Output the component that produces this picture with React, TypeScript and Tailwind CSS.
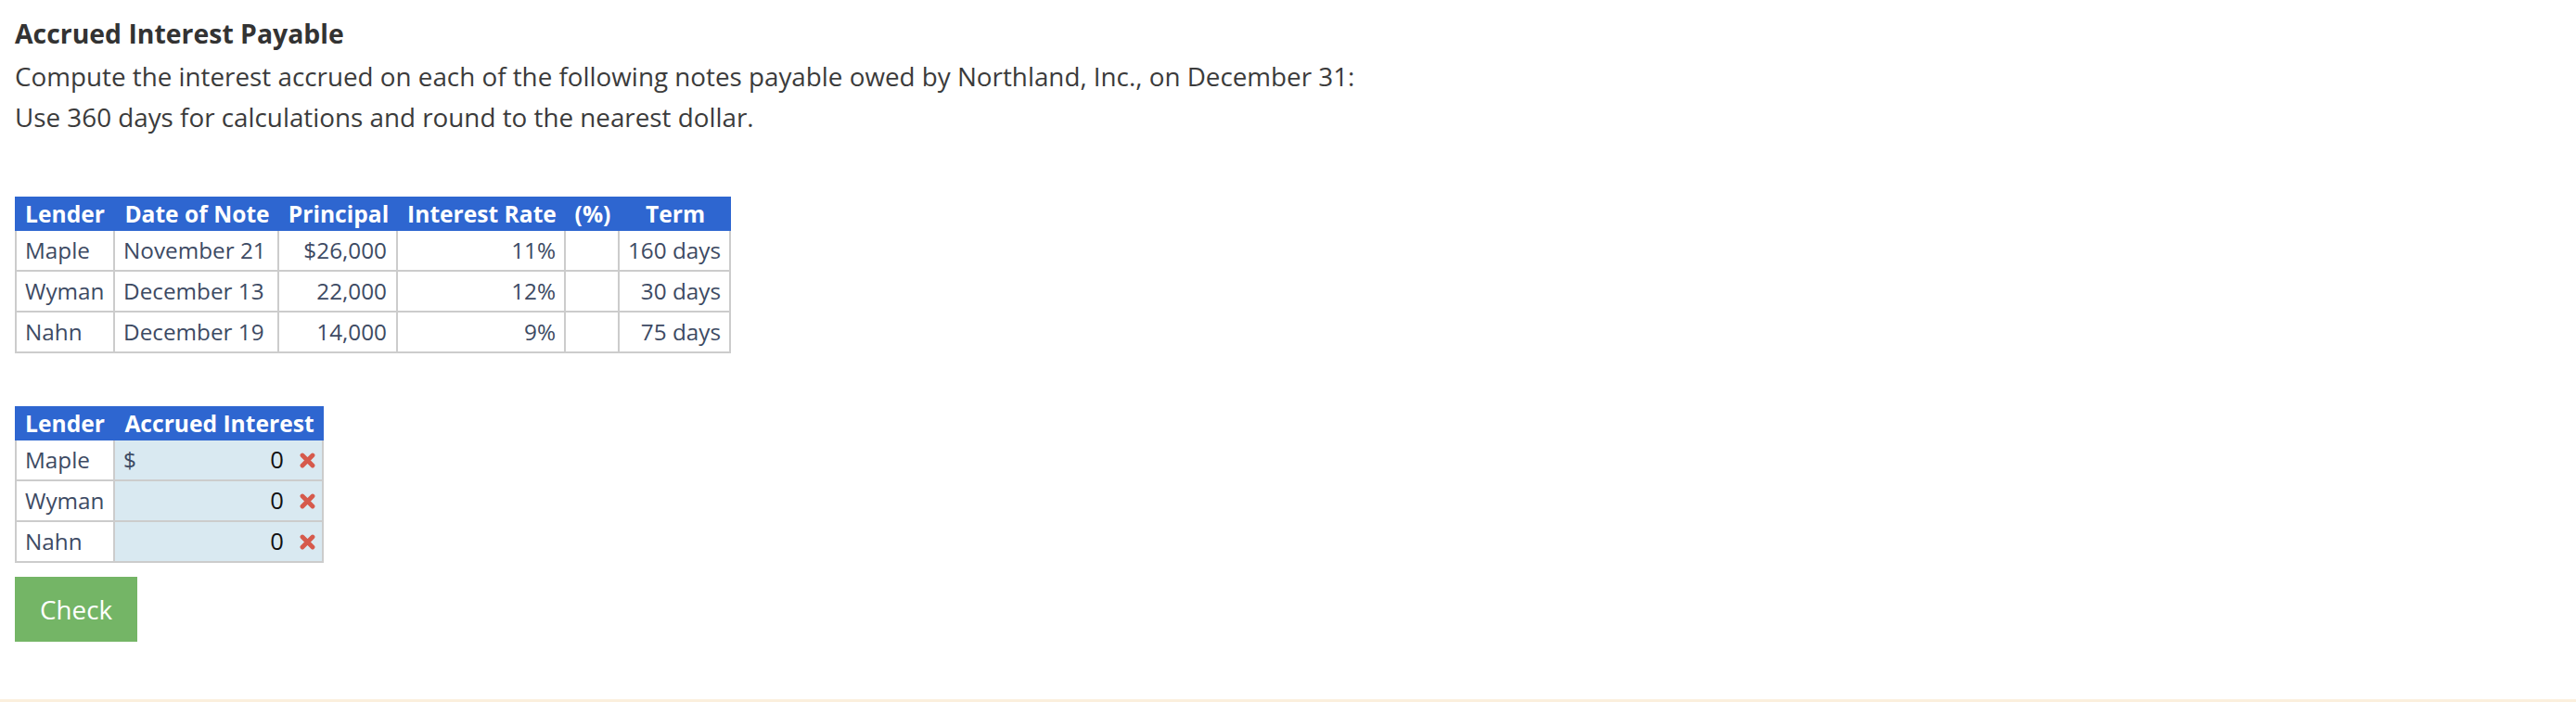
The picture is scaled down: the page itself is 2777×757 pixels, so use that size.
const notes = [
  { lender: "Maple", date: "November 21", principal: "$26,000", rate: "11%", term: "160 days" },
  { lender: "Wyman", date: "December 13", principal: "22,000", rate: "12%", term: "30 days" },
  { lender: "Nahn", date: "December 19", principal: "14,000", rate: "9%", term: "75 days" },
];

const answers = [
  { lender: "Maple", value: "0", dollar: true },
  { lender: "Wyman", value: "0", dollar: false },
  { lender: "Nahn", value: "0", dollar: false },
];

const head = "h-[37px] bg-[#2e66d0] text-center text-[24.6px] font-bold leading-[37px] text-white";
const cell = "h-[44px] border-r-2 border-b-2 border-[#cccccc] text-[24.3px] leading-[42px] text-[#3d4a63]";

function WrongMark() {
  return (
    <svg className="ml-[17px] h-[17px] w-[17px] shrink-0" viewBox="0 0 17 17" aria-label="incorrect">
      <path d="M3 3 L14 14 M14 3 L3 14" stroke="#d65a4c" strokeWidth="4.8" strokeLinecap="round" />
    </svg>
  );
}

function NotesTable() {
  return (
    <div className="grid w-fit grid-cols-[108px_177px_128px_181px_58px_120px]">
      <div className={head}>Lender</div>
      <div className={head}>Date of Note</div>
      <div className={head}>Principal</div>
      <div className={head}>Interest Rate</div>
      <div className={head}>(%)</div>
      <div className={head}>Term</div>
      {notes.map((note) => (
        <div className="contents" key={note.lender}>
          <div className={`${cell} border-l-2 pl-[9px]`}>{note.lender}</div>
          <div className={`${cell} pl-[9px]`}>{note.date}</div>
          <div className={`${cell} pr-[10px] text-right`}>{note.principal}</div>
          <div className={`${cell} pr-[9px] text-right`}>{note.rate}</div>
          <div className={cell} />
          <div className={`${cell} pr-[9px] text-right`}>{note.term}</div>
        </div>
      ))}
    </div>
  );
}

function AnswerTable() {
  return (
    <div className="grid w-fit grid-cols-[108px_225px]">
      <div className={head}>Lender</div>
      <div className={head}>Accrued Interest</div>
      {answers.map((row) => (
        <div className="contents" key={row.lender}>
          <div className={`${cell} border-l-2 pl-[9px]`}>{row.lender}</div>
          <div className={`${cell} flex items-center bg-[#d9e9f1] pl-[9px] pr-[7px]`}>
            <span>{row.dollar ? "$" : ""}</span>
            <span className="ml-auto text-[25.6px] text-[#111111]">{row.value}</span>
            <WrongMark />
          </div>
        </div>
      ))}
    </div>
  );
}

export default function App() {
  return (
    <div className="flex h-[757px] flex-col bg-white font-['Open_Sans',sans-serif]">
      <main className="flex-1 px-4 pt-[12px]">
        <h1 className="text-[28.4px] font-bold leading-[48px] text-[#333333]">Accrued Interest Payable</h1>
        <p className="text-[27.8px] leading-[44px] text-[#3b3b3b]">
          Compute the interest accrued on each of the following notes payable owed by Northland, Inc., on December 31:
          <br />
          Use 360 days for calculations and round to the nearest dollar.
        </p>
        <div className="mt-[64px]">
          <NotesTable />
        </div>
        <div className="mt-[57px]">
          <AnswerTable />
        </div>
        <button
          type="button"
          className="mt-[15px] h-[70px] bg-[#74b566] px-[27px] text-[27.8px] leading-[70px] text-white"
        >
          Check
        </button>
      </main>
      <div className="h-[3px] bg-[#fbefdd]" />
    </div>
  );
}
